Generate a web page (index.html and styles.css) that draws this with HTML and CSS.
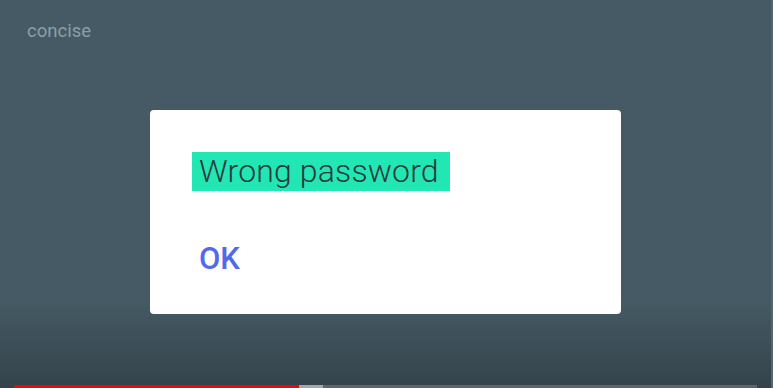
FILE: index.html
```html
<!DOCTYPE html>
<html>
<head>
<meta charset="utf-8">
<link rel="stylesheet" href="styles.css">
</head>
<body>
<div class="screen">
  <div class="brand">concise</div>
  <div class="dialog">
    <div class="message"><span class="highlight">Wrong password</span></div>
    <div class="actions"><span class="ok">OK</span></div>
  </div>
  <div class="spacer"></div>
  <div class="progress">
    <div class="played"></div>
    <div class="buffered"></div>
    <div class="rest"></div>
  </div>
</div>
</body>
</html>
```
FILE: styles.css
```css
html, body {
  margin: 0;
  padding: 0;
}
body {
  width: 773px;
  height: 388px;
  overflow: hidden;
  font-family: Roboto, "Liberation Sans", sans-serif;
}
.screen {
  width: 773px;
  height: 388px;
  display: flex;
  flex-direction: column;
  background: linear-gradient(to bottom, #455a64 0px, #455a64 300px, #34434b 388px);
  box-shadow: inset -2px 0 0 #56666e;
}
.brand {
  padding: 20px 0 0 27px;
  height: 26px;
  font-size: 18.5px;
  line-height: 22px;
  color: #8c9ea8;
}
.dialog {
  margin: 64px 0 0 150px;
  width: 471px;
  height: 204px;
  background: #ffffff;
  border-radius: 4px;
  box-sizing: border-box;
  padding: 42px 0 0 42px;
  display: flex;
  flex-direction: column;
}
.message {
  display: flex;
}
.highlight {
  background: #22e7b5;
  color: #2a3b3a;
  font-weight: 300;
  font-size: 32px;
  line-height: 39px;
  letter-spacing: 0.15px;
  padding: 0 11px 0 7px;
}
.actions {
  margin-top: 53px;
  padding-left: 7px;
}
.ok {
  color: #5169ea;
  font-weight: 500;
  font-size: 31px;
  line-height: 30px;
  display: block;
}
.spacer {
  flex: 1;
}
.progress {
  display: flex;
  height: 3px;
  margin: 0 16px 0 14px;
}
.played {
  width: 285px;
  background: #ff0000;
}
.buffered {
  width: 24px;
  background: #a3a7aa;
}
.rest {
  flex: 1;
  background: #5b666c;
}
```
